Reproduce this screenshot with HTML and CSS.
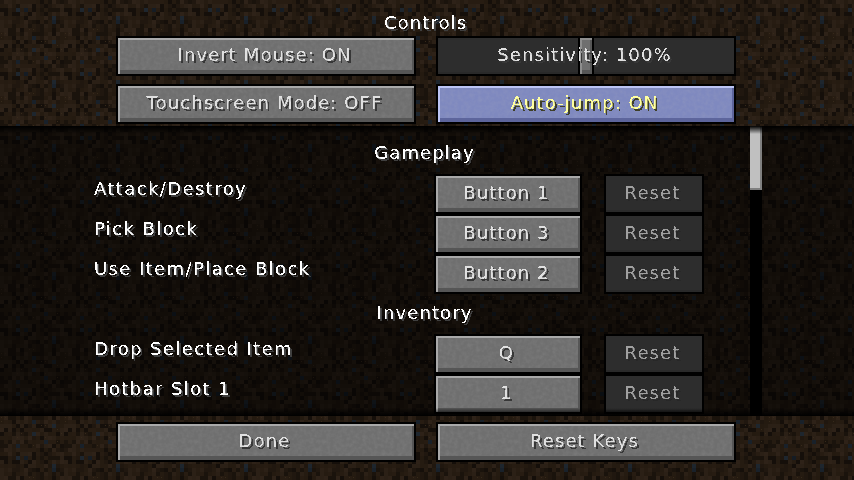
FILE: index.html
```html
<!DOCTYPE html>
<html lang="en">
<head>
<meta charset="utf-8">
<title>Controls</title>
<link rel="stylesheet" href="styles.css">
</head>
<body>
<svg class="defs" width="0" height="0" aria-hidden="true">
  <filter id="crisp" x="0" y="0" width="100%" height="100%" color-interpolation-filters="sRGB">
    <feComponentTransfer><feFuncA type="discrete" tableValues="0 0 1 1"/></feComponentTransfer>
  </filter>
</svg>
<header class="top">
  <h1 class="title"><span class="txt">Controls</span></h1>
  <div class="pair">
    <div class="btn"><span class="txt">Invert Mouse: ON</span></div>
    <div class="slider">
      <span class="txt before">Sensitivity: 100%</span>
      <span class="handle"></span>
    </div>
    <div class="btn"><span class="txt">Touchscreen Mode: OFF</span></div>
    <div class="btn hover"><span class="txt">Auto-jump: ON</span></div>
  </div>
</header>
<main class="list">
  <div class="content">
    <div class="section"><span class="txt">Gameplay</span></div>
    <div class="row"><span class="label"><span class="txt">Attack/Destroy</span></span><div class="btn"><span class="txt">Button 1</span></div><div class="btn off"><span class="txt">Reset</span></div></div>
    <div class="row"><span class="label"><span class="txt">Pick Block</span></span><div class="btn"><span class="txt">Button 3</span></div><div class="btn off"><span class="txt">Reset</span></div></div>
    <div class="row"><span class="label"><span class="txt">Use Item/Place Block</span></span><div class="btn"><span class="txt">Button 2</span></div><div class="btn off"><span class="txt">Reset</span></div></div>
    <div class="section"><span class="txt">Inventory</span></div>
    <div class="row"><span class="label"><span class="txt">Drop Selected Item</span></span><div class="btn"><span class="txt">Q</span></div><div class="btn off"><span class="txt">Reset</span></div></div>
    <div class="row"><span class="label"><span class="txt">Hotbar Slot 1</span></span><div class="btn"><span class="txt">1</span></div><div class="btn off"><span class="txt">Reset</span></div></div>
  </div>
  <div class="track"><div class="thumb"></div></div>
  <div class="fade-top"></div>
  <div class="fade-bottom"></div>
</main>
<footer class="bottom">
  <div class="pair">
    <div class="btn"><span class="txt">Done</span></div>
    <div class="btn"><span class="txt">Reset Keys</span></div>
  </div>
</footer>
<script src="dirt.js"></script>
</body>
</html>
```
FILE: styles.css
```css
* { box-sizing: border-box; }
html, body { margin: 0; padding: 0; }
body {
  width: 854px;
  height: 480px;
  overflow: hidden;
  background-color: #241a11;
  background-size: 64px 64px;
  image-rendering: pixelated;
  font-family: "DejaVu Sans", sans-serif;
  font-size: 18px;
  letter-spacing: 1.1px;
  color: #e0e0e0;
  display: flex;
  flex-direction: column;
}
.defs { position: absolute; }
.txt {
  display: inline-block;
  padding: 0 3px 3px 0;
  line-height: 20px;
  white-space: nowrap;
  text-shadow: 2px 2px 0 #383838;
  filter: url(#crisp);
}
.top { height: 126px; padding-top: 12px; flex: none; }
.title {
  margin: 0 0 1px;
  height: 23px;
  font: inherit;
  color: #fff;
  text-align: center;
}
.title .txt, .section .txt, .label .txt { text-shadow: 2px 2px 0 #3f3f3f; }
.pair {
  width: 620px;
  margin-left: 116px;
  display: grid;
  grid-template-columns: 300px 300px;
  gap: 8px 20px;
}
.btn, .slider {
  height: 40px;
  border: 2px solid #000;
  display: flex;
  align-items: center;
  justify-content: center;
  position: relative;
}
.btn {
  background-color: #6f6f6f;
  background-image: url("data:image/svg+xml,%3Csvg xmlns='http://www.w3.org/2000/svg' width='128' height='64'%3E%3Cfilter id='n'%3E%3CfeTurbulence type='fractalNoise' baseFrequency='.25' numOctaves='2' stitchTiles='stitch'/%3E%3CfeColorMatrix values='0 0 0 0 .5 0 0 0 0 .5 0 0 0 0 .5 0 0 0 1.2 -.45'/%3E%3C/filter%3E%3Crect width='128' height='64' filter='url(%23n)' opacity='.2'/%3E%3C/svg%3E");
  box-shadow: inset 2px 2px 0 #a9a9a9, inset -2px -4px 0 #565656;
}
.hover {
  background-color: #7f89bf;
  box-shadow: inset 2px 2px 0 #bcc4f4, inset -2px -4px 0 #5d659c;
  color: #ffffa0;
}
.hover .txt { text-shadow: 2px 2px 0 #3f3f28; }
.off, .slider {
  background-color: #2d2d2d;
  background-image: none;
  box-shadow: inset 0 -2px 0 #292929;
}
.off { color: #a0a0a0; }
.off .txt { text-shadow: 2px 2px 0 #282828; }
.slider { color: #e0e0e0; }
.slider .txt { position: relative; z-index: 1; }
.handle {
  position: absolute;
  left: 140px;
  top: -2px;
  width: 16px;
  height: 40px;
  background: #6f6f6f;
  border: 2px solid #000;
  box-shadow: inset 2px 2px 0 #8e8e8e, inset -2px -4px 0 #565656;
}
.list {
  flex: none;
  height: 290px;
  display: flex;
  position: relative;
  overflow: hidden;
  background: rgba(0, 0, 0, .5);
}
.content { width: 750px; height: 290px; padding-top: 8px; }
.section {
  height: 40px;
  color: #fff;
  text-align: center;
  padding: 8px 0 0 102px;
}
.row {
  height: 40px;
  padding-left: 94px;
  display: grid;
  grid-template-columns: 340px 148px 122px;
}
.row .off { margin-left: 22px; width: 100px; }
.label { color: #fff; padding-top: 5px; line-height: 20px; letter-spacing: 1.4px; }
.track { width: 12px; height: 290px; background: #000; flex: none; }
.thumb {
  height: 64px;
  background: #c0c0c0;
  box-shadow: inset -2px -2px 0 #808080;
}
.fade-top, .fade-bottom {
  position: absolute;
  left: 0;
  right: 0;
  height: 8px;
}
.fade-top { top: 0; background: linear-gradient(#000, rgba(0,0,0,0)); }
.fade-bottom { bottom: 0; background: linear-gradient(rgba(0,0,0,0), #000); }
.bottom { height: 64px; padding-top: 6px; flex: none; }
```
FILE: dirt.js
```js
// Draws the 16x16 dirt tile (4px cells) that repeats behind the screen.
(function () {
  var seed = 7301;
  function rnd() {
    seed = (seed * 16807) % 2147483647;
    return seed / 2147483647;
  }
  var palette = ['#271c12', '#241a10', '#20170f', '#2b2016', '#1a130c', '#2e2218', '#150f0a', '#251b11'];
  var blue = ['#19212a', '#1e262e', '#151c24'];
  var s = "<svg xmlns='http://www.w3.org/2000/svg' width='64' height='64' shape-rendering='crispEdges'>";
  for (var y = 0; y < 16; y++) {
    for (var x = 0; x < 16; x++) {
      var r = rnd();
      var c = r < 0.035 ? blue[Math.floor(rnd() * 3)] : palette[Math.floor(rnd() * palette.length)];
      s += "<rect x='" + x * 4 + "' y='" + y * 4 + "' width='4' height='4' fill='" + c + "'/>";
      if (rnd() < 0.06) {
        s += "<rect x='" + (x * 4 + 1) + "' y='" + (y * 4 + 1) + "' width='1' height='1' fill='#36291a'/>";
      }
    }
  }
  s += '</svg>';
  document.body.style.backgroundImage = 'url("data:image/svg+xml,' + encodeURIComponent(s) + '")';
})();
```
